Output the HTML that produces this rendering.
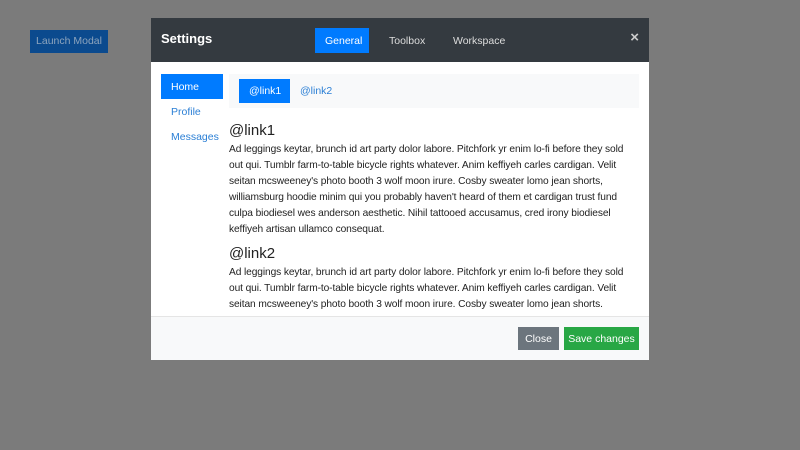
<!DOCTYPE html>
<html><head><style>
*{box-sizing:border-box;margin:0;padding:0}
body{width:800px;height:450px;background:#7b7b7b;font-family:"Liberation Sans",sans-serif;position:relative;overflow:hidden}
.launch{position:absolute;left:30px;top:30px;width:78px;height:23px;background:#0b4a8e;color:#8da4bd;font-size:10.5px;line-height:23px;text-align:center}
.modal{position:absolute;left:151px;top:18px;width:498px;height:342px;background:#fff}
.hd{height:44px;background:#343a40;position:relative}
.hd .t{position:absolute;left:10px;top:13px;color:#fff;font-weight:bold;font-size:13px}
.tab{position:absolute;top:10px;height:25px;line-height:26px;font-size:10.5px;color:#ddd;padding:0 10px}
.tab.a{background:#007bff;color:#fff}
.x{position:absolute;right:10px;top:11px;color:#ccc;font-weight:bold;font-size:15px}
.side{position:absolute;left:10px;top:56px;width:62px}
.side div{height:25px;line-height:26px;padding-left:10px;font-size:10.5px;color:#2b7fd5}
.side .a{background:#007bff;color:#fff}
.main{position:absolute;left:78px;top:56px;width:410px;height:242px;overflow:hidden}
.pills{height:34px;background:#f8f9fa;position:relative}
.pills span{position:absolute;top:5px;height:24px;line-height:25px;font-size:10.5px;color:#2b7fd5;padding:0 10px}
.pills .a{background:#007bff;color:#fff;left:10px;width:51px}
h4{font-weight:normal;font-size:15px;color:#222;margin:14px 0 3px}
h4.s{margin-top:7px}
p{font-size:10.2px;line-height:16px;color:#222;letter-spacing:-0.1px;width:408px}
.ft{position:absolute;left:0;top:298px;width:498px;height:44px;background:#f8f9fa;border-top:1px solid #e5e5e5}
.b{position:absolute;top:10px;height:23px;line-height:24px;font-size:10.5px;color:#fff;text-align:center}
</style></head><body>
<div class="launch">Launch Modal</div>
<div class="modal">
<div class="hd"><div class="t">Settings</div>
<div class="tab a" style="left:164px;width:54px">General</div>
<div class="tab" style="left:228px">Toolbox</div>
<div class="tab" style="left:292px">Workspace</div>
<div class="x">×</div></div>
<div class="side"><div class="a">Home</div><div>Profile</div><div>Messages</div></div>
<div class="main">
<div class="pills"><span class="a">@link1</span><span style="left:61px">@link2</span></div>
<h4>@link1</h4>
<p>Ad leggings keytar, brunch id art party dolor labore. Pitchfork yr enim lo-fi before they sold out qui. Tumblr farm-to-table bicycle rights whatever. Anim keffiyeh carles cardigan. Velit seitan mcsweeney's photo booth 3 wolf moon irure. Cosby sweater lomo jean shorts, williamsburg hoodie minim qui you probably haven't heard of them et cardigan trust fund culpa biodiesel wes anderson aesthetic. Nihil tattooed accusamus, cred irony biodiesel keffiyeh artisan ullamco consequat.</p>
<h4 class="s">@link2</h4>
<p>Ad leggings keytar, brunch id art party dolor labore. Pitchfork yr enim lo-fi before they sold out qui. Tumblr farm-to-table bicycle rights whatever. Anim keffiyeh carles cardigan. Velit seitan mcsweeney's photo booth 3 wolf moon irure. Cosby sweater lomo jean shorts.</p>
</div>
<div class="ft">
<div class="b" style="left:367px;width:41px;background:#6c757d">Close</div>
<div class="b" style="left:413px;width:75px;background:#28a745">Save changes</div>
</div>
</div>
</body></html>
